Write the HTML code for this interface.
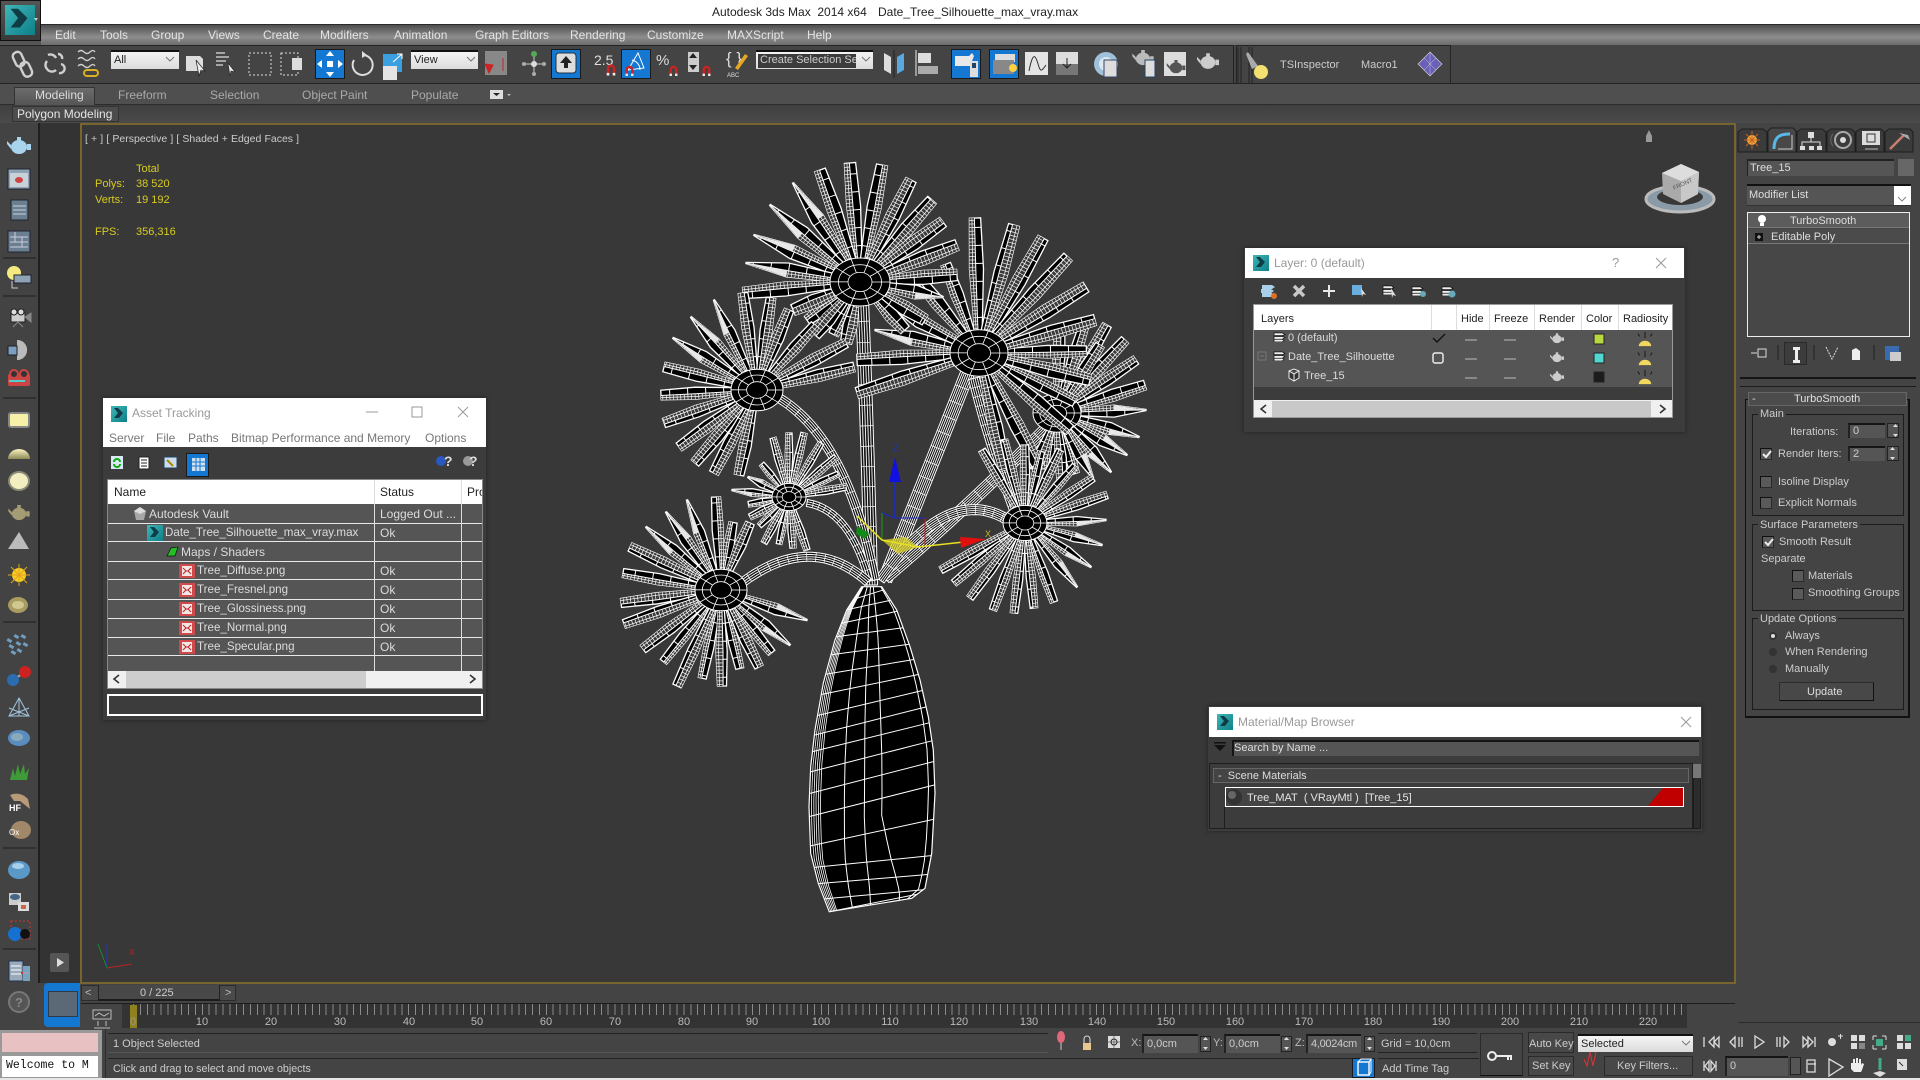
<!DOCTYPE html>
<html><head><meta charset="utf-8"><title>3ds Max</title>
<style>
html,body{margin:0;padding:0;background:#444}
#p{position:relative;width:1920px;height:1080px;overflow:hidden;background:#444;font:11px "Liberation Sans",sans-serif;color:#dcdcdc}
#p div{position:absolute;box-sizing:border-box}
.t{white-space:nowrap;line-height:16px;height:16px}
.m{font-size:12px;color:#e4e4e4;top:27px}
.g{color:#999;font-size:12px}
.lb{background:#444;padding:0 2px}
.dd{background:linear-gradient(#f4f4f4,#dcdcdc);border-top:2px solid #111;color:#222;line-height:16px;padding-left:3px}
.bl{background:#1478d2;border:1px solid #1a1a1a}
.f{background:#555;border-top:2px solid #151515;border-left:2px solid #222;color:#ccc;line-height:16px;padding-left:3px}
.sp{background:#555;border:1px solid #222}
.r{height:1px;background:#e8e8e8;left:0;right:0}
.st{color:#d8cb20;font-size:11px}
.n{top:1014px;color:#bbb;transform:translateX(-50%)}
.cb{width:12px;height:12px;background:#5a5a5a;border:1px solid #2a2a2a;border-top-color:#111;border-left-color:#111}
.gb{border:1px solid #1c1c1c}
.hd{color:#222}
</style></head><body><div id="p">

<!-- title -->
<div style="left:0;top:0;width:1920px;height:24px;background:#fff"></div>
<div style="left:0;top:24px;width:1920px;height:1px;background:#2a2a2a"></div>
<div class="t" style="left:712px;top:4px;font-size:12px;color:#222">Autodesk 3ds Max&nbsp; 2014 x64</div>
<div class="t" style="left:878px;top:4px;font-size:12px;color:#222">Date_Tree_Silhouette_max_vray.max</div>
<div style="left:41px;top:25px;width:1879px;height:20px;background:linear-gradient(#4e4e4e,#8d8d8d 60%,#6c6c6c)"></div>
<div style="left:0;top:25px;width:41px;height:20px;background:#555"></div>
<div style="left:0;top:0;width:41px;height:41px;background:linear-gradient(#555,#3a3a3a);border:1px solid #111"></div>
<div class="t m" style="left:55px">Edit</div><div class="t m" style="left:100px">Tools</div><div class="t m" style="left:151px">Group</div><div class="t m" style="left:208px">Views</div><div class="t m" style="left:263px">Create</div><div class="t m" style="left:320px">Modifiers</div><div class="t m" style="left:394px">Animation</div><div class="t m" style="left:475px">Graph Editors</div><div class="t m" style="left:570px">Rendering</div><div class="t m" style="left:647px">Customize</div><div class="t m" style="left:727px">MAXScript</div><div class="t m" style="left:807px">Help</div>

<!-- toolbar -->
<div style="left:0;top:45px;width:1920px;height:39px;background:#444;border-bottom:1px solid #222"></div>
<div style="left:0;top:45px;width:1234px;height:39px;border:1px solid #242424;border-left:0"></div>
<div style="left:1236px;top:45px;width:215px;height:39px;border:1px solid #242424"></div>
<div class="dd" style="left:111px;top:50px;width:68px;height:19px">All</div>
<div class="dd" style="left:411px;top:50px;width:67px;height:19px">View</div>
<div class="dd" style="left:756px;top:50px;width:117px;height:19px;padding:2px"><span style="display:block;background:#3c3c3c;color:#ccc;width:96px;height:14px;line-height:13px;overflow:hidden;white-space:nowrap;padding-left:2px">Create Selection Se</span></div>
<div class="bl" style="left:315px;top:49px;width:30px;height:30px"></div>
<div class="bl" style="left:551px;top:49px;width:30px;height:30px"></div>
<div class="bl" style="left:621px;top:49px;width:30px;height:30px"></div>
<div class="bl" style="left:951px;top:49px;width:30px;height:30px"></div>
<div class="bl" style="left:989px;top:49px;width:30px;height:30px"></div>
<div class="t" style="left:1280px;top:57px;color:#ccc">TSInspector</div>
<div class="t" style="left:1361px;top:57px;color:#ccc">Macro1</div>

<!-- ribbon -->
<div style="left:0;top:84px;width:1920px;height:21px;background:#4f4f4f;border-bottom:1px solid #2c2c2c"></div>
<div style="left:0;top:105px;width:1920px;height:18px;background:linear-gradient(#3f3f3f,#4b4b4b)"></div>
<div style="left:14px;top:87px;width:81px;height:18px;background:linear-gradient(#6c6c6c,#555);border:1px solid #333;border-bottom:0"></div>
<div class="t" style="left:35px;top:87px;color:#ddd;font-size:12px">Modeling</div>
<div class="t g" style="left:118px;top:87px;color:#aaa">Freeform</div><div class="t g" style="left:210px;top:87px;color:#aaa">Selection</div><div class="t g" style="left:302px;top:87px;color:#aaa">Object Paint</div><div class="t g" style="left:411px;top:87px;color:#aaa">Populate</div>
<div style="left:12px;top:106px;width:107px;height:16px;background:#4c4c4c;border:1px solid #333"></div>
<div class="t" style="left:17px;top:106px;font-size:12px;color:#e4e4e4">Polygon Modeling</div>

<!-- left strip -->
<div style="left:38px;top:123px;width:42px;height:860px;background:#333;border-left:2px solid #1f1f1f"></div>
<div style="left:0;top:123px;width:38px;height:905px;background:#434343"></div>
<div style="left:50px;top:953px;width:19px;height:19px;background:#555;border-radius:2px"></div>

<!-- viewport -->
<div style="left:80px;top:123px;width:1656px;height:861px;background:#383838;border:2px solid #78642e"></div>
<svg id="w" width="1920" height="1080" style="position:absolute;left:0;top:0"></svg>
<div class="t" style="left:85px;top:131px;color:#ccc;font-size:10.5px;word-spacing:.2px">[ + ] [ Perspective ] [ Shaded + Edged Faces ]</div>
<div class="t st" style="left:136px;top:161px">Total</div>
<div class="t st" style="left:95px;top:176px">Polys:</div><div class="t st" style="left:136px;top:176px">38 520</div>
<div class="t st" style="left:95px;top:192px">Verts:</div><div class="t st" style="left:136px;top:192px">19 192</div>
<div class="t st" style="left:95px;top:224px">FPS:</div><div class="t st" style="left:136px;top:224px">356,316</div>

<!-- Asset Tracking -->
<div style="left:103px;top:398px;width:383px;height:322px;background:#3c3c3c;box-shadow:0 0 4px #222"></div>
<div style="left:103px;top:398px;width:383px;height:49px;background:#fff"></div>
<div class="t" style="left:132px;top:405px;font-size:12px;color:#999">Asset Tracking</div>
<div class="t" style="left:109px;top:430px;font-size:12px;color:#777">Server</div><div class="t" style="left:156px;top:430px;font-size:12px;color:#777">File</div><div class="t" style="left:188px;top:430px;font-size:12px;color:#777">Paths</div><div class="t" style="left:231px;top:430px;font-size:12px;color:#777">Bitmap Performance and Memory</div><div class="t" style="left:425px;top:430px;font-size:12px;color:#777">Options</div>
<div class="bl" style="left:186px;top:453px;width:23px;height:24px"></div>
<div style="left:107px;top:479px;width:376px;height:210px;background:#555;border:1px solid #888;overflow:hidden">
 <div style="left:0;top:0;width:376px;height:24px;background:#fff"></div>
 <div class="t hd" style="left:6px;top:4px;font-size:12px">Name</div><div class="t hd" style="left:272px;top:4px;font-size:12px">Status</div><div class="t hd" style="left:359px;top:4px;font-size:12px">Pro</div>
 <div class="r" style="top:43px"></div><div class="r" style="top:61px"></div><div class="r" style="top:81px"></div><div class="r" style="top:99px"></div><div class="r" style="top:119px"></div><div class="r" style="top:138px"></div><div class="r" style="top:157px"></div><div class="r" style="top:175px"></div>
 <div style="left:266px;top:0;width:1px;height:191px;background:#ddd"></div><div style="left:353px;top:0;width:1px;height:191px;background:#ddd"></div>
 <div class="t" style="left:41px;top:26px;font-size:12px">Autodesk Vault</div><div class="t" style="left:272px;top:26px;font-size:12px">Logged Out ...</div>
 <div class="t" style="left:57px;top:45px;font-size:11.6px">Date_Tree_Silhouette_max_vray.max</div><div class="t" style="left:272px;top:45px;font-size:12px">Ok</div>
 <div class="t" style="left:73px;top:64px;font-size:12px">Maps / Shaders</div>
 <div class="t" style="left:89px;top:83px;font-size:11.6px">Tree_Diffuse.png</div><div class="t" style="left:272px;top:83px;font-size:12px">Ok</div>
 <div class="t" style="left:89px;top:102px;font-size:11.6px">Tree_Fresnel.png</div><div class="t" style="left:272px;top:102px;font-size:12px">Ok</div>
 <div class="t" style="left:89px;top:121px;font-size:11.6px">Tree_Glossiness.png</div><div class="t" style="left:272px;top:121px;font-size:12px">Ok</div>
 <div class="t" style="left:89px;top:140px;font-size:11.6px">Tree_Normal.png</div><div class="t" style="left:272px;top:140px;font-size:12px">Ok</div>
 <div class="t" style="left:89px;top:159px;font-size:11.6px">Tree_Specular.png</div><div class="t" style="left:272px;top:159px;font-size:12px">Ok</div>
 <div style="left:0;top:191px;width:376px;height:17px;background:#f0f0f0"></div>
 <div style="left:18px;top:191px;width:240px;height:17px;background:#cdcdcd"></div>
</div>
<div style="left:107px;top:694px;width:376px;height:22px;border:2px solid #fff;background:#3c3c3c"></div>

<!-- Layer window -->
<div style="left:1244px;top:248px;width:441px;height:184px;background:#3c3c3c;box-shadow:0 0 4px #222"></div>
<div style="left:1245px;top:248px;width:439px;height:30px;background:#fff"></div>
<div class="t" style="left:1274px;top:255px;font-size:12px;color:#999">Layer: 0 (default)</div>
<div class="t" style="left:1612px;top:255px;font-size:13px;color:#999">?</div>
<div style="left:1253px;top:304px;width:420px;height:114px;background:#3c3c3c;border:1px solid #999;overflow:hidden">
 <div style="left:0;top:0;width:420px;height:25px;background:#fff"></div>
 <div style="left:0;top:25px;width:420px;height:57px;background:#555"></div>
 <div style="left:177px;top:0;width:1px;height:25px;background:#ddd"></div><div style="left:202px;top:0;width:1px;height:25px;background:#ddd"></div><div style="left:235px;top:0;width:1px;height:25px;background:#ddd"></div><div style="left:280px;top:0;width:1px;height:25px;background:#ddd"></div><div style="left:327px;top:0;width:1px;height:25px;background:#ddd"></div><div style="left:364px;top:0;width:1px;height:25px;background:#ddd"></div>
 <div class="t hd" style="left:7px;top:6px">Layers</div><div class="t hd" style="left:207px;top:6px">Hide</div><div class="t hd" style="left:240px;top:6px">Freeze</div><div class="t hd" style="left:285px;top:6px">Render</div><div class="t hd" style="left:332px;top:6px">Color</div><div class="t hd" style="left:369px;top:6px">Radiosity</div>
 <div class="t" style="left:34px;top:25px">0 (default)</div><div class="t" style="left:34px;top:44px">Date_Tree_Silhouette</div><div class="t" style="left:50px;top:63px">Tree_15</div>
 <div style="left:0;top:95px;width:420px;height:18px;background:#f0f0f0"></div>
 <div style="left:18px;top:96px;width:379px;height:16px;background:#c8c8c8"></div>
</div>

<!-- Material browser -->
<div style="left:1208px;top:706px;width:494px;height:125px;background:#3c3c3c;box-shadow:0 0 4px #222"></div>
<div style="left:1209px;top:707px;width:492px;height:30px;background:#fff"></div>
<div class="t" style="left:1238px;top:714px;font-size:12px;color:#999">Material/Map Browser</div>
<div style="left:1232px;top:740px;width:467px;height:16px;background:#555;border-top:2px solid #151515;border-left:2px solid #151515"></div>
<div class="t" style="left:1234px;top:740px;color:#ddd">Search by Name ...</div>
<div style="left:1209px;top:763px;width:484px;height:66px;border:1px solid #1e1e1e;border-bottom:1px solid #1e1e1e"></div>
<div style="left:1213px;top:768px;width:476px;height:15px;border:1px solid #666;background:#444"></div>
<div class="t" style="left:1218px;top:768px;color:#ddd">-&nbsp; Scene Materials</div>
<div style="left:1225px;top:787px;width:459px;height:20px;border:1px solid #fff;background:#444"></div>
<div class="t" style="left:1247px;top:790px;color:#e4e4e4">Tree_MAT&nbsp; ( VRayMtl )&nbsp; [Tree_15]</div>
<div style="left:1224px;top:807px;width:1px;height:22px;background:#1e1e1e"></div>
<div style="left:1693px;top:764px;width:8px;height:65px;background:#2c2c2c;border:1px solid #1c1c1c"></div>
<div style="left:1693px;top:764px;width:8px;height:14px;background:#777"></div>

<!-- right panel -->
<div style="left:1747px;top:159px;width:147px;height:17px;background:#555;border-top:2px solid #222;border-left:1px solid #222"></div>
<div class="t" style="left:1750px;top:160px;color:#ddd">Tree_15</div>
<div style="left:1898px;top:159px;width:16px;height:17px;background:#676767"></div>
<div style="left:1747px;top:184px;width:164px;height:22px;background:#555;border-top:2px solid #111;border-bottom:1px solid #333"></div>
<div class="t" style="left:1749px;top:187px;color:#ddd">Modifier List</div>
<div style="left:1894px;top:186px;width:17px;height:19px;background:#fff"></div>
<div style="left:1747px;top:212px;width:163px;height:125px;background:#474747;border:1px solid #eee"></div>
<div style="left:1748px;top:213px;width:161px;height:15px;background:#5c5c5c;border-bottom:1px solid #777"></div>
<div style="left:1748px;top:229px;width:161px;height:15px;background:#4b4b4b;border-bottom:1px solid #777"></div>
<div class="t" style="left:1790px;top:213px;color:#ddd">TurboSmooth</div>
<div class="t" style="left:1771px;top:229px;color:#ddd">Editable Poly</div>
<div style="left:1784px;top:342px;width:23px;height:23px;background:#3c3c3c;border:1px solid #2a2a2a"></div>
<div style="left:1740px;top:377px;width:176px;height:2px;background:#151515"></div>
<div style="left:1740px;top:386px;width:176px;height:1px;background:#1c1c1c"></div>
<div style="left:1745px;top:399px;width:165px;height:319px;border:1px solid #111;border-width:1px 2px 2px 1px"></div>
<div style="left:1748px;top:392px;width:159px;height:14px;background:#4c4c4c;border:1px solid #666"></div>
<div class="t" style="left:1752px;top:391px;color:#ddd">-</div>
<div class="t" style="left:1794px;top:391px;color:#e0e0e0">TurboSmooth</div>

<div class="gb" style="left:1752px;top:414px;width:152px;height:102px"></div>
<div class="t lb" style="left:1758px;top:406px;color:#ccc">Main</div>
<div class="t" style="left:1790px;top:424px;color:#ccc">Iterations:</div>
<div class="f" style="left:1848px;top:423px;width:37px;height:15px;line-height:13px">0</div><div class="sp" style="left:1887px;top:423px;width:12px;height:15px"></div>
<div class="cb" style="left:1760px;top:448px"></div>
<div class="t" style="left:1778px;top:446px;color:#ccc">Render Iters:</div>
<div class="f" style="left:1848px;top:446px;width:37px;height:15px;line-height:13px">2</div><div class="sp" style="left:1887px;top:446px;width:12px;height:15px"></div>
<div class="cb" style="left:1760px;top:476px"></div><div class="t" style="left:1778px;top:474px;color:#ccc">Isoline Display</div>
<div class="cb" style="left:1760px;top:497px"></div><div class="t" style="left:1778px;top:495px;color:#ccc">Explicit Normals</div>

<div class="gb" style="left:1752px;top:524px;width:152px;height:87px"></div>
<div class="t lb" style="left:1758px;top:517px;color:#ccc">Surface Parameters</div>
<div class="cb" style="left:1762px;top:536px"></div><div class="t" style="left:1779px;top:534px;color:#ccc">Smooth Result</div>
<div class="t" style="left:1761px;top:551px;color:#ccc">Separate</div>
<div class="cb" style="left:1792px;top:570px"></div><div class="t" style="left:1808px;top:568px;color:#ccc">Materials</div>
<div class="cb" style="left:1792px;top:588px"></div><div class="t" style="left:1808px;top:585px;color:#ccc">Smoothing Groups</div>

<div class="gb" style="left:1752px;top:618px;width:152px;height:92px"></div>
<div class="t lb" style="left:1758px;top:611px;color:#ccc">Update Options</div>
<div class="t" style="left:1785px;top:628px;color:#ccc">Always</div><div class="t" style="left:1785px;top:644px;color:#ccc">When Rendering</div><div class="t" style="left:1785px;top:661px;color:#ccc">Manually</div>
<div style="left:1779px;top:682px;width:95px;height:19px;background:#484848;border:1px solid #2c2c2c;border-right-color:#111;border-bottom-color:#111"></div>
<div class="t" style="left:1807px;top:684px;color:#ddd">Update</div>

<!-- timeline -->
<div style="left:44px;top:983px;width:36px;height:44px;background:#1478d2;border-radius:4px 0 0 4px"></div>
<div style="left:48px;top:991px;width:30px;height:26px;background:#5b6875;border:1px solid #2e3a46"></div>
<div style="left:81px;top:985px;width:155px;height:16px;background:#4a4a4a;border:1px solid #2c2c2c"></div>
<div style="left:98px;top:985px;width:122px;height:16px;background:#484848;border-bottom:2px solid #1b1b1b;border-right:1px solid #222;border-left:1px solid #222"></div>
<div class="t" style="left:140px;top:985px;color:#ccc">0 / 225</div>
<div class="t" style="left:85px;top:985px;color:#bbb">&lt;</div><div class="t" style="left:225px;top:985px;color:#bbb">&gt;</div>
<div style="left:81px;top:1003px;width:1654px;height:1px;background:#1d1d1d"></div>
<div style="left:122px;top:1004px;width:1565px;height:24px;background:#333"></div>
<div style="left:133px;top:1004px;width:1554px;height:11px;background:repeating-linear-gradient(90deg,#8a8a8a 0 1px,#333 1px 6.88px)"></div>
<div style="left:130px;top:1005px;width:7px;height:23px;background:#8f8120"></div>
<div class="t n" style="left:133px;color:#999">0</div>
<div class="t n" style="left:202px">10</div><div class="t n" style="left:271px">20</div><div class="t n" style="left:340px">30</div><div class="t n" style="left:409px">40</div><div class="t n" style="left:477px">50</div><div class="t n" style="left:546px">60</div><div class="t n" style="left:615px">70</div><div class="t n" style="left:684px">80</div><div class="t n" style="left:752px">90</div><div class="t n" style="left:821px">100</div><div class="t n" style="left:890px">110</div><div class="t n" style="left:959px">120</div><div class="t n" style="left:1029px">130</div><div class="t n" style="left:1097px">140</div><div class="t n" style="left:1166px">150</div><div class="t n" style="left:1235px">160</div><div class="t n" style="left:1304px">170</div><div class="t n" style="left:1373px">180</div><div class="t n" style="left:1441px">190</div><div class="t n" style="left:1510px">200</div><div class="t n" style="left:1579px">210</div><div class="t n" style="left:1648px">220</div>
<div style="left:1738px;top:1022px;width:182px;height:1px;background:#2c2c2c"></div>

<!-- status -->
<div style="left:0;top:1030px;width:102px;height:48px;background:#999"></div>
<div style="left:2px;top:1033px;width:96px;height:19px;background:#e8c2c2"></div>
<div style="left:2px;top:1056px;width:96px;height:21px;background:#fff"></div>
<div class="t" style="left:6px;top:1057px;width:92px;overflow:hidden;font:11.5px/18px 'Liberation Mono',monospace;color:#111">Welcome to M</div>
<div style="left:105px;top:1028px;width:1px;height:50px;background:#2c2c2c"></div>
<div style="left:108px;top:1033px;width:940px;height:20px;border-top:1px solid #222;border-bottom:1px solid #555;background:#444"></div>
<div style="left:108px;top:1058px;width:1244px;height:20px;border-top:1px solid #222;background:#444"></div>
<div class="t" style="left:113px;top:1036px;color:#ccc">1 Object Selected</div>
<div class="t" style="left:113px;top:1061px;color:#ccc;font-size:10.7px">Click and drag to select and move objects</div>

<div class="t" style="left:1131px;top:1035px;color:#bbb">X:</div><div class="f" style="left:1142px;top:1034px;width:56px;height:19px">0,0cm</div><div class="sp" style="left:1200px;top:1036px;width:11px;height:16px"></div>
<div class="t" style="left:1213px;top:1035px;color:#bbb">Y:</div><div class="f" style="left:1224px;top:1034px;width:56px;height:19px">0,0cm</div><div class="sp" style="left:1281px;top:1036px;width:11px;height:16px"></div>
<div class="t" style="left:1295px;top:1035px;color:#bbb">Z:</div><div class="f" style="left:1306px;top:1034px;width:55px;height:19px;letter-spacing:-.3px">4,0024cm</div><div class="sp" style="left:1364px;top:1036px;width:11px;height:16px"></div>
<div style="left:1378px;top:1033px;width:99px;height:20px;border-top:1px solid #222;border-bottom:1px solid #222"></div>
<div class="t" style="left:1381px;top:1036px;color:#ccc">Grid = 10,0cm</div>
<div class="bl" style="left:1352px;top:1058px;width:23px;height:20px"></div>
<div style="left:1378px;top:1058px;width:101px;height:20px;border-top:1px solid #222"></div>
<div class="t" style="left:1382px;top:1061px;color:#ccc">Add Time Tag</div>
<div style="left:1480px;top:1033px;width:43px;height:43px;background:#444;border:1px solid #2a2a2a;border-bottom-color:#111"></div>
<div style="left:1528px;top:1032px;width:46px;height:21px;background:#484848;border:1px solid #2a2a2a"></div>
<div class="t" style="left:1529px;top:1036px;color:#ccc">Auto Key</div>
<div style="left:1528px;top:1056px;width:46px;height:20px;background:#484848;border:1px solid #2a2a2a"></div>
<div class="t" style="left:1532px;top:1058px;color:#ccc">Set Key</div>
<div class="dd" style="left:1578px;top:1034px;width:115px;height:18px">Selected</div>
<div style="left:1604px;top:1056px;width:89px;height:20px;background:#484848;border:1px solid #2a2a2a"></div>
<div class="t" style="left:1617px;top:1058px;color:#ccc">Key Filters...</div>
<div class="f" style="left:1725px;top:1056px;width:63px;height:20px">0</div><div class="sp" style="left:1790px;top:1057px;width:11px;height:18px"></div>
<div style="left:0;top:1078px;width:1920px;height:2px;background:#e6e6e6"></div>

<!-- icon overlay -->
<svg width="1920" height="1080" style="position:absolute;left:0;top:0;pointer-events:none" font-family="Liberation Sans, sans-serif">
<defs>
<linearGradient id="tg" x1="0" y1="0" x2="1" y2="1"><stop offset="0" stop-color="#3fb6b8"/><stop offset="1" stop-color="#0d7f88"/></linearGradient>
<symbol id="lg" viewBox="0 0 16 16"><rect width="16" height="16" fill="url(#tg)"/><path d="M3 2h4l5 5-4 5H3l4-5z" fill="#103c46"/></symbol>
<linearGradient id="sy" x1="0" y1="0" x2="0" y2="1"><stop offset="0" stop-color="#fbf6c4"/><stop offset="1" stop-color="#8e8a56"/></linearGradient>
<symbol id="pot" viewBox="0 0 24 18"><ellipse cx="12" cy="10" rx="8" ry="7" fill="currentColor"/><path d="M4 8 0 4v3l4 5zM20 7h4v6h-4z" fill="currentColor"/><rect x="10" y="0" width="4" height="4" fill="currentColor"/></symbol>
<symbol id="mag" viewBox="0 0 14 16"><path d="M2 15V7a5 5 0 0 1 10 0v8h-3V7a2 2 0 0 0-4 0v8z" fill="#c22"/><path d="M2 12h3v3H2zM9 12h3v3H9z" fill="#eee"/></symbol>
<symbol id="png" viewBox="0 0 16 14"><rect width="16" height="14" fill="#cf4a4a"/><rect x="3" y="2" width="10" height="10" fill="#f4e6e6"/><path d="M4 4l3 3-3 3M12 4l-3 3 3 3M7 7h2" stroke="#b22" fill="none"/></symbol>
<symbol id="lay" viewBox="0 0 14 12"><path d="M1 2h9l3 2-3 1H1zM1 6h9l3 1-3 2H1zM1 9h9l2 1-2 2H1z" fill="#eee" stroke="#111" stroke-width=".8"/></symbol>
<symbol id="sun" viewBox="0 0 18 18"><path d="M2 17a7 6 0 0 1 14 0z" fill="#f2d860"/><path d="M9 8V1M3 6 1 3M15 6l2-3" stroke="#111" fill="none"/></symbol>
</defs>

<use href="#lg" x="5" y="5" width="30" height="30"/>
<path d="M34 18h4l-2 3z" fill="#ccc"/>
<!-- toolbar icons -->
<g fill="none" stroke="#cfcfcf" stroke-width="2.4"><rect x="14" y="52" width="9" height="15" rx="4" transform="rotate(-25 18 59)"/><rect x="22" y="62" width="9" height="15" rx="4" transform="rotate(-25 26 70)"/>
<path d="M48 55a6 6 0 0 1 8 3M56 70a6 6 0 0 1-9-1 6 6 0 0 1 0-8" /><path d="M58 54a4 4 0 0 1 4 5M61 64a4 4 0 0 1-2 9"/>
<path d="M78 52q3-3 6 0t6 0 5 0M78 59q3-3 6 0t6 0 5 0M78 66q3-3 6 0t6 0 5 0" stroke-width="1.3"/></g>
<rect x="84" y="70" width="14" height="6" rx="3" fill="none" stroke="#d8b020" stroke-width="2"/>
<path d="M174 57l-4 4-4-4" stroke="#777" fill="none"/><path d="M475 57l-4 4-4-4" stroke="#777" fill="none"/><path d="M870 57l-4 4-4-4" stroke="#777" fill="none"/><path d="M1690 1041l-4 4-4-4" stroke="#777" fill="none"/>
<path d="M186 56h14l3 3v12h-17z" fill="#ddd"/><path d="M196 60l9 11-4-1-2 6z" fill="#eee" stroke="#222" stroke-width=".7"/>
<path d="M216 53h9M216 57h13M216 61h10M216 65h7" stroke="#ddd" stroke-width="1.3"/><path d="M228 63l7 9-4-1-1 5z" fill="#eee" stroke="#222" stroke-width=".6"/>
<rect x="249" y="53" width="22" height="22" fill="none" stroke="#ddd" stroke-dasharray="2 2"/>
<rect x="281" y="53" width="17" height="22" fill="none" stroke="#ddd" stroke-dasharray="2 2"/><rect x="292" y="58" width="10" height="12" fill="#ddd"/>
<g fill="#fff"><path d="M330 51l4 5h-8zM330 77l4-5h-8zM317 64l5-4v8zM343 64l-5-4v8z"/><rect x="327" y="61" width="6" height="6"/></g>
<path d="M354 60a10 10 0 1 0 8-5" fill="none" stroke="#ddd" stroke-width="2"/><path d="M362 51l5 4-5 3z" fill="#ddd"/>
<rect x="383" y="54" width="19" height="18" fill="#3ba0e0"/><rect x="383" y="66" width="14" height="14" fill="#e4e4e4"/><path d="M393 62l9-8M397 54h5v5" stroke="#fff" fill="none"/>
<rect x="485" y="51" width="22" height="24" fill="#888"/><path d="M489 73l-4-9 8 1zM503 58v13" stroke="#c22" fill="#c22"/>
<g stroke="#ccc"><path d="M534 52v24M522 64h24"/></g><circle cx="534" cy="54" r="3" fill="#5a5"/><circle cx="534" cy="64" r="3" fill="#ddd"/><circle cx="524" cy="64" r="2" fill="#aaa"/><circle cx="544" cy="64" r="2" fill="#aaa"/><circle cx="534" cy="74" r="2" fill="#aaa"/>
<rect x="556" y="53" width="20" height="20" rx="3" fill="#ddd" stroke="#234"/><path d="M566 56l6 7h-4v5h-4v-5h-4z" fill="#222"/>
<text x="594" y="65" font-size="14" fill="#ddd">2.5</text><use href="#mag" x="605" y="62" width="12" height="15"/>
<path d="M628 70 638 53l6 15zM632 60a10 10 0 0 1 8 10" stroke="#fff" fill="none"/><use href="#mag" x="624" y="64" width="11" height="13"/>
<text x="656" y="65" font-size="15" fill="#ddd">%</text><use href="#mag" x="668" y="64" width="11" height="13"/>
<rect x="688" y="52" width="11" height="20" fill="#ccc"/><path d="M693 53l4 5h-8zM693 70l4-5h-8z" fill="#222"/><use href="#mag" x="701" y="64" width="11" height="13"/>
<text x="726" y="64" font-size="17" fill="#ddd">{ }</text><path d="M735 68l10-14 3 2-10 14z" fill="#e6a820"/><text x="727" y="77" font-size="6" fill="#ddd">ABC</text>
<path d="M884 53l7 4v17l-7-4z" fill="#ddd"/><path d="M897 57l7-4v17l-7 4z" fill="#5aa8e0"/><path d="M894 50v28" stroke="#222"/>
<rect x="918" y="53" width="13" height="10" fill="#ddd"/><rect x="918" y="66" width="20" height="8" fill="#aaa"/><path d="M916 50v26" stroke="#eee"/>
<g fill="#e8e8e8"><path d="M955 56h14l3-3 2 3-4 10h-15z"/></g><rect x="970" y="61" width="8" height="16" fill="#ddd"/><rect x="972" y="63" width="4" height="5" fill="#246"/>
<rect x="995" y="54" width="20" height="8" fill="#ddd"/><rect x="993" y="60" width="21" height="14" fill="#888"/><circle cx="1013" cy="68" r="4" fill="#ffd040"/>
<rect x="1025" y="52" width="23" height="23" fill="#e4e4e4"/><path d="M1029 71c5-26 8-10 10-4s4 2 7-2" stroke="#333" fill="none"/>
<rect x="1056" y="52" width="22" height="12" fill="#ddd"/><rect x="1056" y="64" width="22" height="11" fill="#777"/><path d="M1067 58v9M1063 64l4 4 4-4" stroke="#222" fill="none"/>
<circle cx="1106" cy="64" r="12" fill="#a0c0dc"/><circle cx="1106" cy="64" r="7" fill="#dce8f0"/><rect x="1104" y="60" width="13" height="17" fill="#ddd" stroke="#346"/>
<use href="#pot" x="1132" y="50" width="22" height="16" style="color:#bbb"/><rect x="1145" y="60" width="10" height="17" fill="#ddd" stroke="#246"/>
<rect x="1164" y="52" width="22" height="24" fill="#ddd"/><use href="#pot" x="1166" y="60" width="20" height="14" style="color:#555"/>
<use href="#pot" x="1197" y="53" width="22" height="17" style="color:#ccc"/>
<path d="M1249 47v36M1252 47v36M1238 47v36M1241 47v36" stroke="#222"/>
<path d="M1248 52l10 14-6 3-6-15z" fill="#aaa"/><circle cx="1261" cy="72" r="7" fill="#f4e070"/>
<path d="M1430 52l12 12-12 12-12-12z" fill="#6a60b8" stroke="#ddd" stroke-width=".6"/><path d="M1424 58l12 12M1436 58l-12 12M1430 52v24" stroke="#ddd" stroke-width=".4"/>
<path d="M490 90h13v9h-13z" fill="#ddd"/><path d="M493 93h7l-3.500 3z" fill="#222"/><path d="M507 94h4l-2 2z" fill="#bbb"/>
<!-- left strip -->
<path d="M3 258h33M3 296h33M3 398h33M3 622h33M3 848h33M3 949h33" stroke="#1c1c1c"/>
<use href="#pot" x="7" y="136" width="24" height="20" style="color:#a8d4ee"/>
<rect x="8" y="169" width="22" height="20" fill="#8ea4b4" stroke="#223"/><rect x="10" y="173" width="18" height="14" fill="#c8d0d8"/><ellipse cx="19" cy="180" rx="4" ry="3" fill="#c44"/>
<rect x="11" y="200" width="17" height="20" fill="#6a8090" stroke="#223"/><path d="M13 206h13M13 210h13M13 214h13" stroke="#ccd"/>
<rect x="8" y="231" width="22" height="21" fill="#6a8090" stroke="#223"/><path d="M10 237h18M10 242h18M10 247h18M15 232v10M22 237v10" stroke="#ccd"/>
<circle cx="14" cy="273" r="7" fill="#f4ea80"/><rect x="14" y="275" width="17" height="8" fill="#8ea4b4" stroke="#223"/><path d="M12 281v7h6" stroke="#ccc" fill="none"/>
<rect x="11" y="313" width="14" height="9" fill="#ccc" stroke="#222"/><circle cx="14" cy="312" r="3" fill="#ddd" stroke="#222"/><circle cx="21" cy="312" r="3" fill="#ddd" stroke="#222"/><path d="M25 317l6-4v9zM18 322l-5 5M18 322l5 5" stroke="#888" fill="#888"/>
<path d="M17 340a10 10 0 0 1 0 20z" fill="#ccc"/><path d="M17 340a10 10 0 0 1 0 20" fill="#bbb"/><rect x="8" y="346" width="9" height="9" fill="#7a9fc0" stroke="#222"/>
<rect x="8" y="374" width="22" height="12" rx="2" fill="#c44"/><circle cx="14" cy="374" r="4" fill="#333" stroke="#c44" stroke-width="2"/><circle cx="24" cy="374" r="4" fill="#333" stroke="#c44" stroke-width="2"/><path d="M9 381h16" stroke="#5cc" stroke-width="2"/>
<rect x="9" y="413" width="20" height="14" rx="2" fill="#f6f0a8" stroke="#888" stroke-width="2"/>
<path d="M8 459a11 10 0 0 1 22 0z" fill="url(#sy)"/>
<ellipse cx="19" cy="481" rx="10" ry="9" fill="#f3eec0" stroke="#8a8a78" stroke-width="2"/>
<use href="#pot" x="8" y="505" width="22" height="16" style="color:#a49c74"/>
<path d="M19 532l10 17H8z" fill="#bbb"/>
<circle cx="19" cy="575" r="7" fill="#f4d020"/><path d="M19 564v22M8 575h22M11 567l16 16M27 567l-16 16" stroke="#e8a020"/>
<ellipse cx="18" cy="605" rx="10" ry="8" fill="#a89c60"/><ellipse cx="18" cy="605" rx="6" ry="4" fill="#d0c890"/>
<g fill="#6f9dc0"><rect x="8" y="638" width="5" height="3" transform="rotate(30 8 638)"/><rect x="15" y="634" width="5" height="3" transform="rotate(30 15 634)"/><rect x="22" y="634" width="5" height="3" transform="rotate(30 22 634)"/><rect x="10" y="644" width="5" height="3" transform="rotate(30 10 644)"/><rect x="17" y="641" width="5" height="3" transform="rotate(30 17 641)"/><rect x="24" y="642" width="5" height="3" transform="rotate(30 24 642)"/><rect x="18" y="648" width="5" height="3" transform="rotate(30 18 648)"/><rect x="12" y="650" width="5" height="3" transform="rotate(30 12 650)"/></g>
<path d="M12 680l14-8" stroke="#aaa" stroke-width="2"/><circle cx="13" cy="680" r="6" fill="#2b6cb0"/><circle cx="25" cy="672" r="6" fill="#c22"/>
<path d="M19 698l10 18H9zM19 698v18M9 716l20-8M29 716L9 708" fill="none" stroke="#9fc4de"/>
<ellipse cx="19" cy="738" rx="11" ry="8" fill="#5a8cc0"/><ellipse cx="17" cy="737" rx="6" ry="4" fill="#8ab"/>
<path d="M10 780l3-12 2 8 3-12 2 10 4-10 1 10 4-6-2 12z" fill="#3f9a38"/>
<path d="M10 795q10-4 18 4l2 10-10-8-6 0z" fill="#b89a78"/><text x="9" y="811" font-size="9" font-weight="700" fill="#fff">HF</text>
<ellipse cx="21" cy="830" rx="10" ry="9" fill="#a08868"/><text x="9" y="835" font-size="8" fill="#fff">Ox</text>
<ellipse cx="19" cy="870" rx="11" ry="9" fill="#5a98c8"/><ellipse cx="18" cy="866" rx="6" ry="3" fill="#a8d0e8"/>
<rect x="9" y="893" width="12" height="12" fill="#ccc"/><ellipse cx="15" cy="897" rx="5" ry="3" fill="#468"/><rect x="18" y="902" width="11" height="9" fill="#ddd"/><rect x="21" y="905" width="5" height="4" fill="#c64"/>
<rect x="11" y="921" width="19" height="18" fill="none" stroke="#c33" stroke-dasharray="2 2"/><circle cx="15" cy="934" r="7" fill="#1670d0"/><circle cx="25" cy="934" r="5" fill="#111"/>
<rect x="9" y="961" width="14" height="20" fill="#9ab" stroke="#235"/><path d="M11 966h10M11 970h10M11 974h10" stroke="#fff"/><path d="M30 973h-9" stroke="#c33" stroke-width="2"/><rect x="23" y="966" width="7" height="15" fill="#8bd" opacity=".8"/>
<circle cx="19" cy="1002" r="10" fill="#555" stroke="#777" stroke-width="2"/><text x="15" y="1007" font-size="13" font-weight="700" fill="#888">?</text>
<path d="M57 958l7 4.500-7 4.500z" fill="#ddd"/>
<!-- viewport extras -->
<path d="M1646 142v-6l3-6 3 6v6z" fill="#999"/>
<ellipse cx="1680" cy="199" rx="34" ry="13" fill="#8a9aa6" stroke="#bbb" stroke-width="3"/><ellipse cx="1680" cy="197" rx="23" ry="8" fill="#383838"/>
<path d="M1662 173l19-9 18 8-1 22-17 9-18-9z" fill="#aaa"/><path d="M1662 173l19 8 18-9-18-8z" fill="#ddd"/><path d="M1681 181v22l17-9 1-22z" fill="#c8c8c8"/><text x="1674" y="190" font-size="6" fill="#555" transform="rotate(-24 1674 190)">FRONT</text>
<path d="M107 968V944" stroke="#2233bb"/><path d="M107 968l-9-24" stroke="#1a8a30"/><path d="M107 968l25-4" stroke="#b22"/><text x="129" y="955" font-size="8" fill="#b22">X</text>
<!-- Asset icons -->
<use href="#lg" x="111" y="406" width="16" height="16"/>
<path d="M366 412h12" stroke="#999"/><rect x="412" y="407" width="10" height="10" fill="none" stroke="#999"/><path d="M458 407l10 10M468 407l-10 10" stroke="#999"/>
<rect x="111" y="456" width="12" height="13" fill="#d8e8f4"/><path d="M114 462a3 3 0 0 1 6 0M120 464a3 3 0 0 1-6 0" stroke="#1a1" stroke-width="2" fill="none"/>
<rect x="139" y="457" width="10" height="12" fill="#fff" stroke="#222"/><path d="M141 460h6M141 463h6M141 466h6" stroke="#222"/>
<rect x="164" y="457" width="13" height="11" fill="#cde" stroke="#246"/><path d="M167 460l6 6" stroke="#a80" stroke-width="2"/>
<rect x="192" y="458" width="13" height="13" fill="#cfe0f0"/><path d="M192 462h13M192 466h13M196 458v13M200 458v13" stroke="#1478d2"/>
<circle cx="441" cy="461" r="5" fill="#2858c0"/><text x="444" y="466" font-size="14" font-weight="700" fill="#ddd">?</text>
<circle cx="468" cy="461" r="5" fill="#999"/><text x="469" y="466" font-size="14" font-weight="700" fill="#ddd">?</text>
<path d="M134 511h12l-2 9h-8z" fill="#a8a8a8"/><path d="M134 511l6-4 6 4-6 3z" fill="#ddd"/>
<use href="#lg" x="147" y="525" width="16" height="16"/>
<path d="M167 556l4-8 7-1-3 9z" fill="#22c022" stroke="#111" stroke-width=".7"/>
<use href="#png" x="179" y="564" width="16" height="14"/><use href="#png" x="179" y="583" width="16" height="14"/><use href="#png" x="179" y="602" width="16" height="14"/><use href="#png" x="179" y="621" width="16" height="14"/><use href="#png" x="179" y="640" width="16" height="14"/>
<path d="M119 675l-5 4 5 4M470 675l5 4-5 4" stroke="#333" stroke-width="1.6" fill="none"/>
<!-- Layer icons -->
<use href="#lg" x="1253" y="255" width="16" height="16"/>
<path d="M1656 258l10 10M1666 258l-10 10" stroke="#999"/>
<g fill="#a8d0e8"><path d="M1262 285h10l3 2-3 2h-10zM1261 289h10l3 2-3 2h-10zM1262 293h10l2 2-2 2h-10z"/></g><circle cx="1274" cy="296" r="3" fill="#e07020"/>
<path d="M1294 286l10 10M1304 286l-10 10" stroke="#c8c8c8" stroke-width="3.500"/>
<path d="M1323 291h12M1329 285v12" stroke="#e8e8e8" stroke-width="2"/>
<rect x="1352" y="285" width="10" height="10" fill="#6aaee0"/><path d="M1361 288l5 7-3-1-1 3z" fill="#ddd"/>
<use href="#lay" x="1382" y="284" width="13" height="11"/><path d="M1391 288l5 8-3-1-1 3z" fill="#ddd"/>
<use href="#lay" x="1411" y="285" width="13" height="11"/><circle cx="1423" cy="294" r="3" fill="#6ab"/>
<use href="#lay" x="1441" y="285" width="13" height="11"/><circle cx="1452" cy="294" r="3.500" fill="#6ab"/>
<use href="#lay" x="1273" y="331" width="13" height="11"/><use href="#lay" x="1273" y="350" width="13" height="11"/>
<path d="M1289 371l5-2 5 2v7l-5 3-5-3zM1289 371l5 3 5-3M1294 374v7" fill="#333" stroke="#eee"/>
<rect x="1258" y="352" width="8" height="8" fill="none" stroke="#777"/><path d="M1260 356h4" stroke="#777"/>
<path d="M1433 338l4 4 8-8" stroke="#111" stroke-width="1.4" fill="none"/><rect x="1433" y="353" width="10" height="10" rx="2" fill="none" stroke="#f0f0f0" stroke-width="1.4"/>
<g stroke="#888" stroke-width="2"><path d="M1465 340h12M1504 340h12M1465 359h12M1504 359h12M1465 378h12M1504 378h12"/></g>
<use href="#pot" x="1550" y="333" width="14" height="11" style="color:#ccc"/><use href="#pot" x="1550" y="352" width="14" height="11" style="color:#ccc"/><use href="#pot" x="1550" y="371" width="14" height="11" style="color:#ccc"/>
<rect x="1594" y="334" width="10" height="10" fill="#b8d840" stroke="#222"/><rect x="1594" y="353" width="10" height="10" fill="#50d8d0" stroke="#222"/><rect x="1594" y="372" width="10" height="10" fill="#1c1c1c" stroke="#222"/>
<use href="#sun" x="1637" y="331" width="16" height="16"/><use href="#sun" x="1637" y="350" width="16" height="16"/><use href="#sun" x="1637" y="369" width="16" height="16"/>
<path d="M1266 405l-5 4 5 4M1660 405l5 4-5 4" stroke="#333" stroke-width="1.6" fill="none"/>
<!-- Material icons -->
<use href="#lg" x="1217" y="714" width="16" height="16"/>
<path d="M1681 717l10 10M1691 717l-10 10" stroke="#999"/>
<path d="M1214 745h12l-6 6z M1214 742h12v1.500h-12z" fill="#111"/>
<circle cx="1234" cy="797" r="8" fill="#333"/><circle cx="1232" cy="795" r="4" fill="#666"/>
<path d="M1648 806l15-18h20v18z" fill="#c00000"/>
<!-- right tabs -->
<g fill="#3b3b3b" stroke="#1e1e1e"><path d="M1738 152v-20l4-3h21l4 3v20z"/><path d="M1768 152v-21l3-3h22l3 3v21z" fill="#484848"/><path d="M1797 152v-20l4-3h21l4 3v20z"/><path d="M1827 152v-20l4-3h20l4 3v20z"/><path d="M1856 152v-20l4-3h21l3 3v20z"/><path d="M1885 152v-20l4-3h21l3 3v20z"/></g>
<circle cx="1752" cy="140" r="5" fill="#f4b040"/><path d="M1752 131v18M1744 140h16M1746 134l12 12M1758 134l-12 12" stroke="#c8641e"/>
<path d="M1774 149c0-14 8-15 16-15" stroke="#58b8e8" stroke-width="3" fill="none"/><path d="M1778 149h14v-14" stroke="#ccc" fill="none"/>
<rect x="1808" y="132" width="6" height="6" fill="#ddd"/><path d="M1811 138v4M1802 146v-4h18v4" stroke="#ddd" fill="none"/><rect x="1800" y="146" width="5" height="4" fill="#ddd"/><rect x="1809" y="146" width="5" height="4" fill="#ddd"/><rect x="1817" y="146" width="5" height="4" fill="#ddd"/>
<circle cx="1843" cy="140" r="8" fill="none" stroke="#aaa" stroke-width="2"/><circle cx="1843" cy="140" r="3" fill="#ddd"/><path d="M1833 134a9 9 0 0 0 0 12" stroke="#666" fill="none"/>
<rect x="1862" y="131" width="18" height="14" fill="#ddd"/><rect x="1867" y="134" width="8" height="8" fill="none" stroke="#333"/><path d="M1865 149h13" stroke="#bbb"/>
<path d="M1890 149l14-14" stroke="#c88070" stroke-width="2.500"/><path d="M1899 133l9 2 2 5-5-3z" fill="#aaa"/>
<path d="M1906 197l-4 4-4-4" stroke="#888" fill="none"/>
<circle cx="1762" cy="219" r="4" fill="#fff"/><rect x="1760" y="223" width="4" height="3" fill="#fff"/>
<rect x="1755" y="233" width="8" height="8" fill="#111"/><path d="M1757 237h4M1759 235v4" stroke="#ccc"/>
<!-- modifier btn row -->
<path d="M1751 353h6M1758 349h8v8h-8z" stroke="#ddd" fill="none"/><path d="M1778 345v15M1814 345v15M1874 345v15" stroke="#222"/>
<path d="M1793 347h7v3h-2v10h2v3h-7v-3h2v-10h-2z" fill="#eee"/><path d="M1826 347l6 12 6-12" stroke="#ddd" stroke-dasharray="2 1" fill="none"/><path d="M1852 350l4-2 4 3v9h-8z" fill="#eee"/>
<rect x="1885" y="346" width="14" height="14" fill="#3a6ab0"/><rect x="1890" y="352" width="11" height="9" fill="#ccc"/>
<path d="M1893 427l2.500-3 2.500 3zM1893 434l2.500 3 2.500-3zM1890 450l2.500-3 2.500 3zM1890 457l2.500 3 2.500-3z" fill="#ddd"/>
<path d="M1763 454l3 3 5-6M1765 542l3 3 5-6" stroke="#eee" stroke-width="2" fill="none"/>
<circle cx="1773" cy="636" r="4" fill="#333"/><circle cx="1773" cy="636" r="2" fill="#ddd"/><circle cx="1773" cy="652" r="4" fill="#333"/><circle cx="1773" cy="669" r="4" fill="#333"/>
<!-- timeline -->
<rect x="93" y="1010" width="18" height="9" fill="none" stroke="#bbb"/><path d="M95 1016l4-3 5 3 5-3M98 1021v5M106 1021v5M94 1028h16" stroke="#bbb" fill="none"/>
<!-- status icons -->
<ellipse cx="1061" cy="1037" rx="4" ry="6" fill="#e06878"/><path d="M1061 1043v7" stroke="#ccc"/>
<rect x="1083" y="1043" width="8" height="7" fill="#e8c890"/><path d="M1084 1043v-4a3 3 0 0 1 6 0v4" stroke="#ddd" fill="none"/>
<rect x="1108" y="1036" width="12" height="12" fill="#ddd"/><circle cx="1114" cy="1042" r="3" fill="none" stroke="#222"/><path d="M1114 1036v12M1108 1042h12" stroke="#222" stroke-width=".5"/>
<path d="M1203 1040l2.500-3 2.500 3M1203 1047l2.500 3 2.500-3M1289 1040l-2.500-3-2.500 3M1289 1047l-2.500 3-2.500-3M1372 1040l-2.500-3-2.500 3M1372 1047l-2.500 3-2.500-3" fill="#ddd"/>
<rect x="1358" y="1062" width="11" height="13" fill="none" stroke="#fff" stroke-width="1.400"/><path d="M1358 1062l3-3h10l-2 3M1371 1059v13l-2 3" stroke="#fff" fill="none"/>
<circle cx="1492" cy="1056" r="4" fill="none" stroke="#eee" stroke-width="2"/><path d="M1496 1056h16M1508 1056v4M1511 1056v4" stroke="#eee" stroke-width="2"/>
<path d="M1590 1052l-3 14 -3-7M1590 1052l3 14 3-14" stroke="#d33" fill="none"/>
<!-- playback -->
<g fill="none" stroke="#ddd" stroke-width="1.300">
<path d="M1704 1037v10M1714 1037l-5 5 5 5zM1719 1037l-5 5 5 5z"/><path d="M1735 1037l-5 5 5 5zM1739 1037v10M1742 1037v10"/><path d="M1755 1036l9 6-9 6z"/><path d="M1777 1037v10M1780 1037v10M1784 1037l5 5-5 5z"/><path d="M1803 1037l5 5-5 5zM1808 1037l5 5-5 5zM1815 1037v10"/>
<path d="M1704 1061v10M1709 1061l-4 5 4 5zM1711 1061l4 5-4 5zM1716 1061v10"/>
<path d="M1807 1060h8v12h-8zM1808 1064h8"/><path d="M1829 1059l14 8-14 9z"/></g>
<circle cx="1832" cy="1042" r="4" fill="#ddd"/><path d="M1838 1036h5M1840.500 1034v5" stroke="#ddd"/>
<rect x="1851" y="1035" width="6" height="6" fill="#ddd"/><rect x="1859" y="1035" width="6" height="6" fill="#ddd"/><rect x="1851" y="1043" width="6" height="6" fill="#ddd"/><rect x="1859" y="1043" width="6" height="6" fill="#888"/>
<path d="M1873 1036h4M1873 1036v4M1886 1036h-4M1886 1036v4M1873 1049h4M1873 1049v-4M1886 1049h-4M1886 1049v-4" stroke="#ddd" fill="none"/><rect x="1876" y="1039" width="7" height="7" fill="#4a8"/>
<rect x="1897" y="1035" width="6" height="6" fill="#ddd"/><rect x="1905" y="1035" width="6" height="6" fill="#4a8"/><rect x="1897" y="1043" width="6" height="6" fill="#ddd"/><rect x="1905" y="1043" width="6" height="6" fill="#ddd"/>
<path d="M1851 1069v-6h2v-4h2v4h1v-5h2v5h1v-4h2v6l1-2 2 1-2 6-1 2h-7z" fill="#eee"/>
<path d="M1873 1073l7-2 6 2-6 4z" fill="#ddd"/><path d="M1880 1058v12" stroke="#4a8" stroke-width="3"/>
<rect x="1897" y="1059" width="10" height="11" fill="#ddd"/><path d="M1899 1062l4 4" stroke="#333"/>
</svg>

<script>
(function(){
var s=[];
function pts(a){return a.map(function(p){return p[0].toFixed(1)+','+p[1].toFixed(1)}).join(' ')}
function pg(a,f,sw){s.push('<polygon points="'+pts(a)+'" fill="'+f+'" stroke="#fff" stroke-width="'+(sw||1.3)+'"/>')}
function ln(a,o){s.push('<polyline points="'+pts(a)+'" fill="none" stroke="#fff" stroke-width="'+(o||1)+'"/>')}
function frond(c,tp,w,r0,sd){
 var k=tp[2]||0,dx=tp[0]-c[0],dy=tp[1]-c[1],L=Math.hypot(dx,dy),ux=dx/L,uy=dy/L,nx=-uy,ny=ux;
 function P(a,b){return [c[0]+ux*a+nx*b,c[1]+uy*a+ny*b]}
 var a0=r0,a1=a0+(L-a0)*.55;
 function hw(a){ if(a<a1)return w*.55+w*.45*(a-a0)/(a1-a0);
  var e=k==1?0.6:w*.8; return w+(e-w)*(a-a1)/(L-a1)}
 var A=[a0,a1,L],l=A.map(function(a){return P(a,-hw(a))}),r=A.map(function(a){return P(a,hw(a))}).reverse();
 pg(l.concat(r),'#000');
 var m=k==2?-.25:.1;
 var hs=A.map(function(a){return P(a,sd*hw(a))}),hm=A.map(function(a){return P(a,sd*m*hw(a))}).reverse();
 s.push('<polygon points="'+pts(hs.concat(hm))+'" fill="#3a3a3a"/>');
 ln(A.map(function(a){return P(a,sd*.55*hw(a))}),.7);
 ln(A.map(function(a){return P(a,sd*m*hw(a))}),1);
 for(var a=a0+3,i=0;a<L;a+=3.6,i++){ var h=hw(a);
  ln([P(a,sd*m*h),P(a,sd*h)],.65);
  if(i%5==3) ln([P(a,sd*m*h),P(a,-sd*h)],1);
 }
 if(k==1){ s.push('<polygon points="'+pts([P(a1,sd*.1),P(a1,sd*hw(a1)),P(L,0)])+'" fill="#e8e8e8"/>') }
}
function hub(c,r){
 var ry=r*.8;
 s.push('<ellipse cx="'+c[0]+'" cy="'+c[1]+'" rx="'+r+'" ry="'+ry+'" fill="#000" stroke="#fff"/>');
 [.4,.72].forEach(function(m){s.push('<ellipse cx="'+c[0]+'" cy="'+c[1]+'" rx="'+(r*m).toFixed(1)+'" ry="'+(ry*m).toFixed(1)+'" fill="none" stroke="#fff" stroke-width=".8"/>')});
 for(var a=0;a<6.28;a+=.63){ln([[c[0]+Math.cos(a)*r*.4,c[1]+Math.sin(a)*ry*.4],[c[0]+Math.cos(a)*r,c[1]+Math.sin(a)*ry]],.8)}
}
function crown(c,w,r,T){
 var S=T.map(function(t){return {t:t,a:Math.atan2(t[1]-c[1],t[0]-c[0]),l:Math.hypot(t[0]-c[0],t[1]-c[1])}}).sort(function(x,y){return x.a-y.a});
 var ex=[];
 S.forEach(function(q,i){var n=S[(i+1)%S.length],g=n.a-q.a;if(g<0)g+=6.283;
  if(g>.42&&g<.95){var a=q.a+g/2,l=Math.min(q.l,n.l)*.94;ex.push([c[0]+Math.cos(a)*l,c[1]+Math.sin(a)*l,0])}});
 ex.forEach(function(t,i){frond(c,t,w*.9,r*.75,i%2?1:-1)});
 T.forEach(function(t,i){frond(c,t,w,r*.75,(i%2?1:-1))});
 hub(c,r);
}
function stem(p0,p1,p2,w,n,fill){
 var N=28,C=[];
 for(var i=0;i<=N;i++){var t=i/N,u=1-t;var x=u*u*p0[0]+2*u*t*p1[0]+t*t*p2[0],y=u*u*p0[1]+2*u*t*p1[1]+t*t*p2[1];
  var dx=2*u*(p1[0]-p0[0])+2*t*(p2[0]-p1[0]),dy=2*u*(p1[1]-p0[1])+2*t*(p2[1]-p1[1]),d=Math.hypot(dx,dy);C.push([x,y,-dy/d,dx/d])}
 function off(o){return C.map(function(q){return [q[0]+q[2]*o,q[1]+q[3]*o]})}
 var L=off(-w/2),R=off(w/2).reverse();
 s.push('<polygon points="'+pts(L.concat(R))+'" fill="'+(fill||'#151515')+'" stroke="#fff"/>');
 for(var j=1;j<n;j++){ln(off(-w/2+w*j/n),.9)}
 for(i=0;i<=N;i+=2){ln([[C[i][0]+C[i][2]*-w/2,C[i][1]+C[i][3]*-w/2],[C[i][0]+C[i][2]*w/2,C[i][1]+C[i][3]*w/2]],.7)}
}
// stems
stem([871,585],[868,450],[862,300],13,5);
stem([885,580],[925,480],[968,372],14,7);
stem([885,578],[965,510],[1050,425],12,6);
stem([975,378],[990,440],[1018,515],13,6);
stem([880,580],[950,480],[1011,522],10,5);
stem([875,580],[848,440],[779,398],9,4);
stem([869,580],[850,510],[807,503],7,3);
stem([868,582],[810,530],[739,585],9,4);

// vase
function cv(a){return a.map(function(p){return [780+p[0]/3,560+p[1]/3]})}
var Lf=cv([[245,80],[200,150],[165,240],[130,370],[105,510],[92,620],[87,740],[92,880],[115,970],[148,1055]]);
var Rt=cv([[305,80],[350,150],[390,260],[420,360],[445,470],[460,570],[465,700],[455,880],[435,985],[395,1015]]);
function ip(a,t){t=Math.max(0,Math.min(1,t));var x=t*(a.length-1),i=Math.min(a.length-2,Math.floor(x)),f=x-i;return [a[i][0]+(a[i+1][0]-a[i][0])*f,a[i][1]+(a[i+1][1]-a[i][1])*f]}
s.push('<polygon points="'+pts(Lf.concat(Rt.slice().reverse()))+'" fill="#000" stroke="#fff" stroke-width="1.2"/>');
[.018,.036,.054,.072,.09,.28,.44,.58,.95].forEach(function(f,i){var a=[];for(var t=0;t<=1.001;t+=.05){var q=ip(Lf,t),r=ip(Rt,t),g=f+(i>5&&i<8&&t>.7?(t-.7)*(i==7?.9:.2):0);a.push([q[0]+(r[0]-q[0])*g,q[1]+(r[1]-q[1])*g])}ln(a,i<5?.8:1)});
[.06,.11,.16,.21,.26,.31,.36,.41,.46,.51,.57,.63,.69,.76,.83,.89,.95,1].forEach(function(t){ln([ip(Lf,t),ip(Rt,t-.045)],1)});
// crowns back to front
crown([1057,413],6,24,[[1060,325,2],[1085,322,2],[1107,325,2],[1125,340,2],[1136,360,2],[1145,385,0],[1146,410,1],[1139,437,1],[1127,455,1],[1111,472,1],[1093,478,1],[1062,480,2],[1035,470,2],[1100,345,2]]);
crown([979,353],7,29,[[975,218,0],[1014,225,2],[1043,238,2],[1068,257,2],[1086,287,2],[1095,320,2],[1090,380,0],[1070,430,0],[1040,470,0],[1005,470,2],[875,330,1],[857,360,0],[857,393,2],[886,303,1],[915,275,0]]);
crown([860,282],7,30,[[850,163,0],[882,165,0],[911,180,2],[932,200,2],[943,222,2],[957,245,2],[957,275,0],[943,297,1],[925,320,0],[905,330,0],[820,170,0],[793,183,1],[770,205,1],[754,235,1],[746,263,1],[743,293,0],[793,310,2],[815,335,2],[846,343,2]]);
crown([757,390],6,26,[[714,300,1],[691,317,1],[673,338,1],[664,367,0],[661,395,0],[664,423,2],[679,447,2],[695,463,2],[714,473,2],[739,475,2],[743,293,2],[771,298,2],[789,310,2],[815,325,2],[846,343,2],[854,367,2]]);
crown([789,497],3.8,17,[[732,490,1],[748,477,1],[789,433,2],[804,433,2],[821,443,2],[836,457,2],[846,487,2],[807,550,2],[793,548,2],[764,543,2],[750,517,2],[773,438,2]]);
crown([1025,523],4.6,22,[[1107,495,2],[1106,520,1],[1102,545,1],[1091,567,1],[1077,587,1],[1054,602,0],[1034,608,2],[1014,613,2],[993,610,2],[970,598,2],[954,583,2],[941,570,2],[982,450,2],[1004,440,2],[1025,445,2],[1060,450,2],[1093,478,2]]);
crown([721,590],5.6,26,[[687,500,1],[716,497,0],[750,523,2],[666,512,1],[646,527,1],[630,547,2],[623,573,0],[621,603,2],[624,624,2],[643,649,2],[677,686,2],[722,686,2],[759,667,2],[790,645,1],[807,620,1]]);
// gizmo
s.push('<path d="M895 518V480" stroke="#1a28d0" stroke-width="1.500"/><path d="M895 457l6 25h-12z" fill="#1010e0"/><text x="893" y="451" font-size="9" fill="#2030d0" font-family="Liberation Sans">Z</text>');
s.push('<path d="M882 513l13 5h30" fill="none" stroke="#1a28d0"/><path d="M925 518v27" stroke="#c01818"/><path d="M882 540v-27" stroke="#18a018"/>');
s.push('<path d="M882 540l24-3 12 10-20 7z" fill="#d8d028" opacity=".75"/>');
s.push('<path d="M857 516l25 24 36 7 46-5" fill="none" stroke="#e8e020" stroke-width="1.500"/><path d="M960 537l26 2-25 9z" fill="#e01010"/><text x="985" y="537" font-size="9" fill="#c8b820" font-family="Liberation Sans">X</text>');
s.push('<path d="M857 526l12 7-4 6-9-5z" fill="#128a18"/>');
document.getElementById('w').innerHTML=s.join('');
})();
</script>
</div></body></html>
